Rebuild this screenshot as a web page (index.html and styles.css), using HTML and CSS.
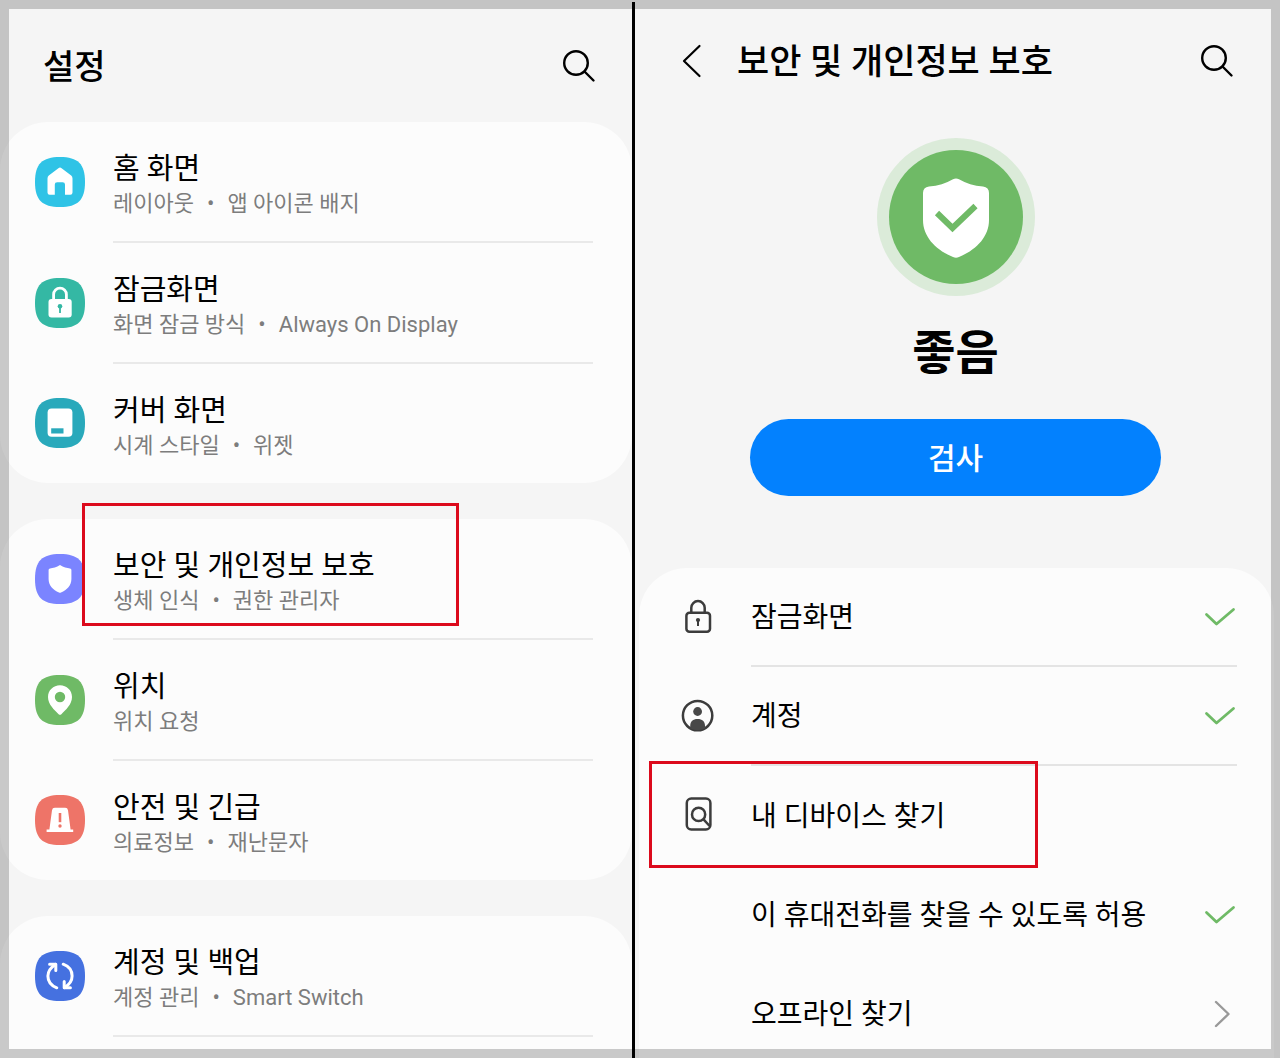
FILE: index.html
```
<!DOCTYPE html>
<html lang="ko">
  <head>
    <meta charset="UTF-8" />
    <meta name="viewport" content="width=device-width, initial-scale=1.0" />
    <title>설정</title>
    <link rel="stylesheet" href="styles.css" />
  </head>
  <body>
    <main class="screens">
      <section class="pane">
        <header class="settings-header">
          <h1 class="settings-title">설정</h1>
          <button type="button" class="icon-button" aria-label="검색">
            <svg width="34" height="34" viewBox="0 0 34 34" fill="none" stroke="#000" stroke-width="2.4" stroke-linecap="round">
              <circle cx="14" cy="14" r="11.8" />
              <path d="M22.5 22.5L31.5 31.5" />
            </svg>
          </button>
        </header>

        <ul class="card">
          <li class="item">
            <a href="#home" class="item-link">
              <svg class="app-icon" viewBox="0 0 50 50">
                <path fill="#2fc3e6" d="M25 0C43 0 50 7 50 25S43 50 25 50 0 43 0 25 7 0 25 0Z" />
                <path fill="#fff" d="M23.4 11.2Q25 9.8 26.6 11.2L36.2 18.6Q37.5 19.7 37.5 21.4V35.5Q37.5 37.7 35.3 37.7H30V27.6Q30 25.2 27.6 25.2H22.2Q19.8 25.2 19.8 27.6V37.7H14.7Q12.5 37.7 12.5 35.5V21.4Q12.5 19.7 13.8 18.6Z" />
              </svg>
              <span class="item-body">
                <span class="item-title">홈 화면</span>
                <span class="item-sub">레이아웃<span class="dot">•</span>앱 아이콘 배지</span>
              </span>
            </a>
          </li>
          <li class="item">
            <a href="#lock" class="item-link">
              <svg class="app-icon" viewBox="0 0 50 50">
                <path fill="#34b8a4" d="M25 0C43 0 50 7 50 25S43 50 25 50 0 43 0 25 7 0 25 0Z" />
                <path fill="none" stroke="#fff" stroke-width="2.8" d="M18.6 22V16.5a6.4 6.4 0 0 1 12.8 0V22" />
                <rect fill="#fff" x="13.5" y="21" width="23.2" height="18.6" rx="3" />
                <circle fill="#34b8a4" cx="25" cy="28.3" r="2.3" />
                <path stroke="#34b8a4" stroke-width="1.8" d="M25 29V35" />
              </svg>
              <span class="item-body">
                <span class="item-title">잠금화면</span>
                <span class="item-sub">화면 잠금 방식<span class="dot">•</span>Always On Display</span>
              </span>
            </a>
          </li>
          <li class="item">
            <a href="#cover" class="item-link">
              <svg class="app-icon" viewBox="0 0 50 50">
                <path fill="#29a9bb" d="M25 0C43 0 50 7 50 25S43 50 25 50 0 43 0 25 7 0 25 0Z" />
                <rect fill="#fff" x="12.6" y="10.6" width="24.8" height="28.2" rx="4" />
                <rect fill="#29a9bb" x="16.2" y="30.3" width="12.3" height="5.2" />
              </svg>
              <span class="item-body">
                <span class="item-title">커버 화면</span>
                <span class="item-sub">시계 스타일<span class="dot">•</span>위젯</span>
              </span>
            </a>
          </li>
        </ul>

        <ul class="card">
          <li class="item">
            <a href="#security" class="item-link">
              <svg class="app-icon" viewBox="0 0 50 50">
                <path fill="#7b84ff" d="M25 0C43 0 50 7 50 25S43 50 25 50 0 43 0 25 7 0 25 0Z" />
                <path fill="#fff" d="M25 11C28.5 13.4 32 14.2 35 14.4Q36.4 14.6 36.4 16V25C36.4 31.5 32 36 26 38.6Q25 39 24 38.6C18 36 13.6 31.5 13.6 25V16Q13.6 14.6 15 14.4C18 14.2 21.5 13.4 25 11Z" />
              </svg>
              <span class="item-body">
                <span class="item-title">보안 및 개인정보 보호</span>
                <span class="item-sub">생체 인식<span class="dot">•</span>권한 관리자</span>
              </span>
            </a>
            <span class="highlight highlight-security"></span>
          </li>
          <li class="item">
            <a href="#location" class="item-link">
              <svg class="app-icon" viewBox="0 0 50 50">
                <path fill="#6fba66" d="M25 0C43 0 50 7 50 25S43 50 25 50 0 43 0 25 7 0 25 0Z" />
                <path fill="#fff" fill-rule="evenodd" d="M25 10.3C31.8 10.3 37 15.4 37 22C37 29.5 30.5 35 26.4 39.2Q25 40.4 23.6 39.2C19.5 35 13 29.5 13 22C13 15.4 18.2 10.3 25 10.3ZM25 16.8A5.2 5.2 0 1 0 25 27.2A5.2 5.2 0 1 0 25 16.8Z" />
              </svg>
              <span class="item-body">
                <span class="item-title">위치</span>
                <span class="item-sub">위치 요청</span>
              </span>
            </a>
          </li>
          <li class="item">
            <a href="#safety" class="item-link">
              <svg class="app-icon" viewBox="0 0 50 50">
                <path fill="#ee7468" d="M25 0C43 0 50 7 50 25S43 50 25 50 0 43 0 25 7 0 25 0Z" />
                <path fill="#fff" d="M19.8 12.8H30.2Q32.6 12.8 33 15.2L35.6 34.6H38.2V37H11.6V34.6H14.4L17 15.2Q17.4 12.8 19.8 12.8Z" />
                <path stroke="#ee7468" stroke-width="2.6" d="M25 18V27.2" />
                <circle fill="#ee7468" cx="25" cy="31" r="1.7" />
              </svg>
              <span class="item-body">
                <span class="item-title">안전 및 긴급</span>
                <span class="item-sub">의료정보<span class="dot">•</span>재난문자</span>
              </span>
            </a>
          </li>
        </ul>

        <ul class="card">
          <li class="item">
            <a href="#accounts" class="item-link">
              <svg class="app-icon" viewBox="0 0 50 50">
                <path fill="#4571e0" d="M25 0C43 0 50 7 50 25S43 50 25 50 0 43 0 25 7 0 25 0Z" />
                <g fill="none" stroke="#fff" stroke-width="3" stroke-linecap="round" stroke-linejoin="round">
                  <path d="M21.8 36.8C16 34.6 12.9 30 12.9 25C12.9 20.5 15.6 16.5 20.4 13.4" />
                  <path d="M14.6 13.2H20.8V19.6" />
                  <path d="M28.2 13.2C34 15.4 37.1 20 37.1 25C37.1 29.5 34.4 33.5 29.6 36.6" />
                  <path d="M35.4 36.8H29.2V30.4" />
                </g>
              </svg>
              <span class="item-body">
                <span class="item-title">계정 및 백업</span>
                <span class="item-sub">계정 관리<span class="dot">•</span>Smart Switch</span>
              </span>
            </a>
          </li>
          <li class="item"></li>
        </ul>
      </section>

      <div class="divider"></div>

      <section class="pane security-pane">
        <header class="security-header">
          <button type="button" class="icon-button" aria-label="뒤로">
            <svg width="20" height="34" viewBox="0 0 20 34" fill="none" stroke="#000" stroke-width="2.2" stroke-linecap="round" stroke-linejoin="round">
              <path d="M17.5 2L2 17L17.5 32" />
            </svg>
          </button>
          <h2 class="security-title">보안 및 개인정보 보호</h2>
          <button type="button" class="icon-button" aria-label="검색">
            <svg width="34" height="34" viewBox="0 0 34 34" fill="none" stroke="#000" stroke-width="2.4" stroke-linecap="round">
              <circle cx="14" cy="14" r="11.8" />
              <path d="M22.5 22.5L31.5 31.5" />
            </svg>
          </button>
        </header>

        <div class="status">
          <svg width="158" height="158" viewBox="0 0 158 158">
            <circle cx="79" cy="79" r="79" fill="#dbebd9" />
            <circle cx="79" cy="79" r="67" fill="#6fba66" />
            <path fill="#fff" d="M76 41.2Q79 39.6 82 41.2C89 45.4 97 47.8 106 48.6Q112 49.4 112 55V82C112 99 99 112 82 119Q79 120.4 76 119C59 112 46 99 46 82V55Q46 49.4 52 48.6C61 47.8 69 45.4 76 41.2Z" />
            <path fill="none" stroke="#6fba66" stroke-width="6" d="M60 75L75.5 90L98.5 68" />
          </svg>
          <p class="status-text">좋음</p>
          <button type="button" class="scan-button">검사</button>
        </div>

        <ul class="card check-list">
          <li class="check-item">
            <svg class="line-icon" viewBox="0 0 36 36" fill="none" stroke="#3c3c3c" stroke-width="2.5">
              <path d="M11.3 14V8.8a6.7 6.7 0 0 1 13.4 0V14" />
              <rect x="6.4" y="13.8" width="23.6" height="19" rx="3" />
              <circle cx="18" cy="21" r="2.1" fill="#3c3c3c" stroke="none" />
              <path d="M18 21V27" stroke-width="2" />
            </svg>
            <a href="#lock-screen" class="check-body divided">
              <span class="check-label">잠금화면</span>
              <svg class="tick" viewBox="0 0 32 20"><path d="M2.5 7.5L12.5 17L29.5 2.5" /></svg>
            </a>
          </li>
          <li class="check-item">
            <svg class="line-icon" viewBox="0 0 36 36" fill="none" stroke="#3c3c3c" stroke-width="2.5">
              <circle cx="17.6" cy="17.6" r="14.7" />
              <circle cx="17.6" cy="13.5" r="4.4" fill="#484848" stroke="none" />
              <path fill="#484848" stroke="none" d="M10.2 30.5V28C10.2 23.5 13 21 17.6 21S25 23.5 25 28V30.5Q17.6 34 10.2 30.5Z" />
            </svg>
            <a href="#account" class="check-body divided">
              <span class="check-label">계정</span>
              <svg class="tick" viewBox="0 0 32 20"><path d="M2.5 7.5L12.5 17L29.5 2.5" /></svg>
            </a>
          </li>
          <li class="check-item">
            <svg class="line-icon" viewBox="0 0 36 36" fill="none" stroke="#3c3c3c" stroke-width="2.5">
              <rect x="6.8" y="1.5" width="23.6" height="31" rx="4.5" />
              <circle cx="18.6" cy="17.4" r="6.6" />
              <path d="M23.3 22.2L29.6 29" />
            </svg>
            <a href="#find" class="check-body"><span class="check-label">내 디바이스 찾기</span></a>
            <span class="highlight highlight-find"></span>
          </li>
          <li class="check-item">
            <span class="line-icon"></span>
            <a href="#allow" class="check-body">
              <span class="check-label">이 휴대전화를 찾을 수 있도록 허용</span>
              <svg class="tick" viewBox="0 0 32 20"><path d="M2.5 7.5L12.5 17L29.5 2.5" /></svg>
            </a>
          </li>
          <li class="check-item">
            <span class="line-icon"></span>
            <a href="#offline" class="check-body">
              <span class="check-label">오프라인 찾기</span>
              <svg class="chevron" viewBox="0 0 18 28"><path d="M3 2L15.5 14L3 26" /></svg>
            </a>
          </li>
        </ul>
      </section>
    </main>
  </body>
</html>
```
FILE: styles.css
```
* {
  box-sizing: border-box;
}

body {
  margin: 0;
  background: #f5f5f5;
  color: #000;
  font-family: Roboto, "Noto Sans CJK KR", sans-serif;
}

h1,
h2,
p,
ul {
  margin: 0;
  padding: 0;
}

ul {
  list-style: none;
}

a {
  color: inherit;
  text-decoration: none;
}

svg {
  display: block;
  flex-shrink: 0;
}

.screens {
  position: relative;
  display: grid;
  grid-template-columns: 632fr 3px 645fr;
  height: 100vh;
  overflow: hidden;
}

/* shaded frame over the edges of both screens */
.screens::after {
  content: "";
  position: absolute;
  inset: 0;
  border: 9px solid rgba(0, 0, 0, 0.2);
  pointer-events: none;
}

.pane {
  min-width: 0;
}

.divider {
  margin-top: 2px;
  background: #000;
  z-index: 1;
}

.icon-button {
  padding: 0;
  border: 0;
  background: none;
}

.card {
  background: #fcfcfc;
  border-radius: 48px;
}

.card + .card {
  margin-top: 36px;
}

.settings-header {
  display: flex;
  align-items: center;
  justify-content: space-between;
  height: 122px;
  padding: 10px 36px 0 43px;
}

.settings-title {
  padding-bottom: 3px;
  font-size: 34px;
  font-weight: 500;
}

.item {
  position: relative;
  height: 121px;
}

.item:last-child {
  height: 119px;
}

.item-link {
  display: flex;
  align-items: center;
  gap: 28px;
  height: 100%;
  padding: 0 39px 0 35px;
}

.app-icon {
  width: 50px;
  height: 50px;
  margin-bottom: 2px;
}

.item-body {
  flex: 1;
  display: flex;
  flex-direction: column;
  justify-content: center;
  height: 100%;
  padding-top: 6px;
  border-bottom: 2px solid #e9e9e9;
}

.item:last-child .item-body {
  border-bottom: 0;
}

.item-title {
  font-size: 29px;
  line-height: 38px;
}

.item-sub {
  color: #7d7d7d;
  font-size: 22px;
  line-height: 32px;
}

.dot {
  margin: 0 13px;
}

.highlight {
  position: absolute;
  border: 3px solid #dc0a1c;
  pointer-events: none;
}

.highlight-security {
  top: -16px;
  left: 82px;
  width: 377px;
  height: 123px;
}

.security-pane {
  padding: 0 6px 0 4px;
}

.security-header {
  display: flex;
  align-items: center;
  height: 122px;
  padding: 0 40px 0 43px;
}

.security-title {
  flex: 1;
  margin-left: 35px;
  padding-bottom: 5px;
  font-size: 35px;
  font-weight: 500;
}

.status {
  display: flex;
  flex-direction: column;
  align-items: center;
  padding: 16px 2px 72px 0;
}

.status-text {
  margin: 22px 0 31px;
  font-size: 47px;
  font-weight: 700;
  line-height: 70px;
}

.scan-button {
  width: 65%;
  height: 77px;
  padding: 0 0 4px;
  border: 0;
  border-radius: 39px;
  background: #0381fe;
  color: #fff;
  font-family: inherit;
  font-size: 30px;
  font-weight: 500;
}

/* the list runs on below the fold, so only its top is rounded */
.check-list {
  border-radius: 48px 48px 0 0;
}

.check-item {
  position: relative;
  display: flex;
  align-items: center;
  gap: 35px;
  height: 99px;
  padding: 0 37px 0 41px;
  font-size: 28px;
}

.line-icon {
  flex-shrink: 0;
  width: 36px;
  height: 36px;
  margin-bottom: 2px;
}

.check-body {
  flex: 1;
  display: flex;
  align-items: center;
  justify-content: space-between;
  height: 100%;
}

.check-label {
  padding-bottom: 3px;
}

.divided {
  border-bottom: 2px solid #e4e4e4;
}

.tick {
  width: 32px;
  height: 20px;
  margin-right: 1px;
  fill: none;
  stroke: #6fba66;
  stroke-width: 2.8;
  stroke-linecap: round;
  stroke-linejoin: round;
}

.chevron {
  width: 18px;
  height: 28px;
  margin-right: 6px;
  fill: none;
  stroke: #999;
  stroke-width: 2.4;
  stroke-linecap: round;
  stroke-linejoin: round;
}

.highlight-find {
  top: -5px;
  left: 10px;
  width: 389px;
  height: 107px;
}
```
